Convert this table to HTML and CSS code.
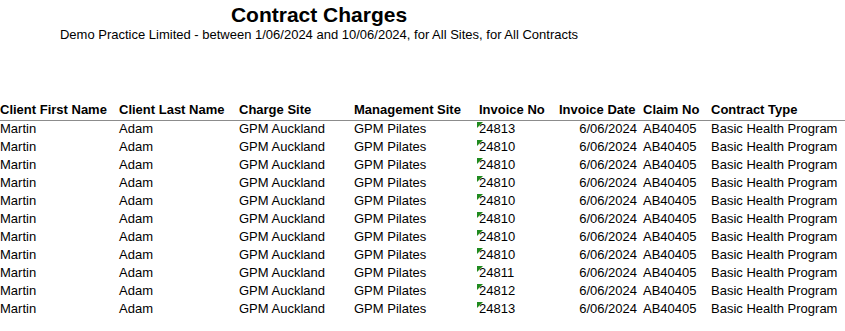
FILE: index.html
```html
<!DOCTYPE html>
<html>
<head>
<meta charset="utf-8">
<link rel="stylesheet" href="styles.css">
</head>
<body>
<div class="report">
  <div class="titles">
    <div class="title">Contract Charges</div>
    <div class="subtitle">Demo Practice Limited - between 1/06/2024 and 10/06/2024, for All Sites, for All Contracts</div>
  </div>
  <div class="grid">
    <div class="row head">
      <div>Client First Name</div>
      <div>Client Last Name</div>
      <div>Charge Site</div>
      <div>Management Site</div>
      <div>Invoice No</div>
      <div>Invoice Date</div>
      <div>Claim No</div>
      <div>Contract Type</div>
    </div>
  </div>
  <div class="grid" id="body"></div>
</div>
<script>
  var inv = ["24813","24810","24810","24810","24810","24810","24810","24810","24811","24812","24813"];
  var body = document.getElementById("body");
  inv.forEach(function (n) {
    var r = document.createElement("div");
    r.className = "row";
    r.innerHTML = '<div>Martin</div><div>Adam</div><div>GPM Auckland</div><div>GPM Pilates</div>' +
      '<div class="inv"><span class="flag"></span>' + n + '</div>' +
      '<div class="date">6/06/2024</div><div>AB40405</div><div>Basic Health Program</div>';
    body.appendChild(r);
  });
</script>
</body>
</html>
```

FILE: styles.css
```css
html, body {
  margin: 0;
  padding: 0;
  background: #fff;
}
body {
  font-family: "Liberation Sans", Arial, sans-serif;
  color: #000;
  width: 845px;
  height: 331px;
  overflow: hidden;
}
.titles {
  width: 638px;
  text-align: center;
  padding-top: 4px;
}
.title {
  font-size: 21px;
  font-weight: bold;
  line-height: 22px;
}
.subtitle {
  font-size: 13px;
  line-height: 15px;
  margin-top: 1px;
}
.grid {
  font-size: 13px;
  line-height: 15px;
}
.head {
  margin-top: 60px;
  font-weight: bold;
  padding-bottom: 3px;
  border-bottom: 1px solid #8c8c8c;
}
.row {
  display: grid;
  grid-template-columns: 119px 120px 115px 125px 80px 84px 68px 1fr;
  white-space: nowrap;
}
#body .row {
  padding-bottom: 3px;
}
.inv {
  position: relative;
}
.flag {
  position: absolute;
  left: -2px;
  top: 1px;
  width: 0;
  height: 0;
  border-top: 6px solid #1f8a1f;
  border-right: 6px solid transparent;
}
.date {
  text-align: right;
  padding-right: 6px;
}
```
